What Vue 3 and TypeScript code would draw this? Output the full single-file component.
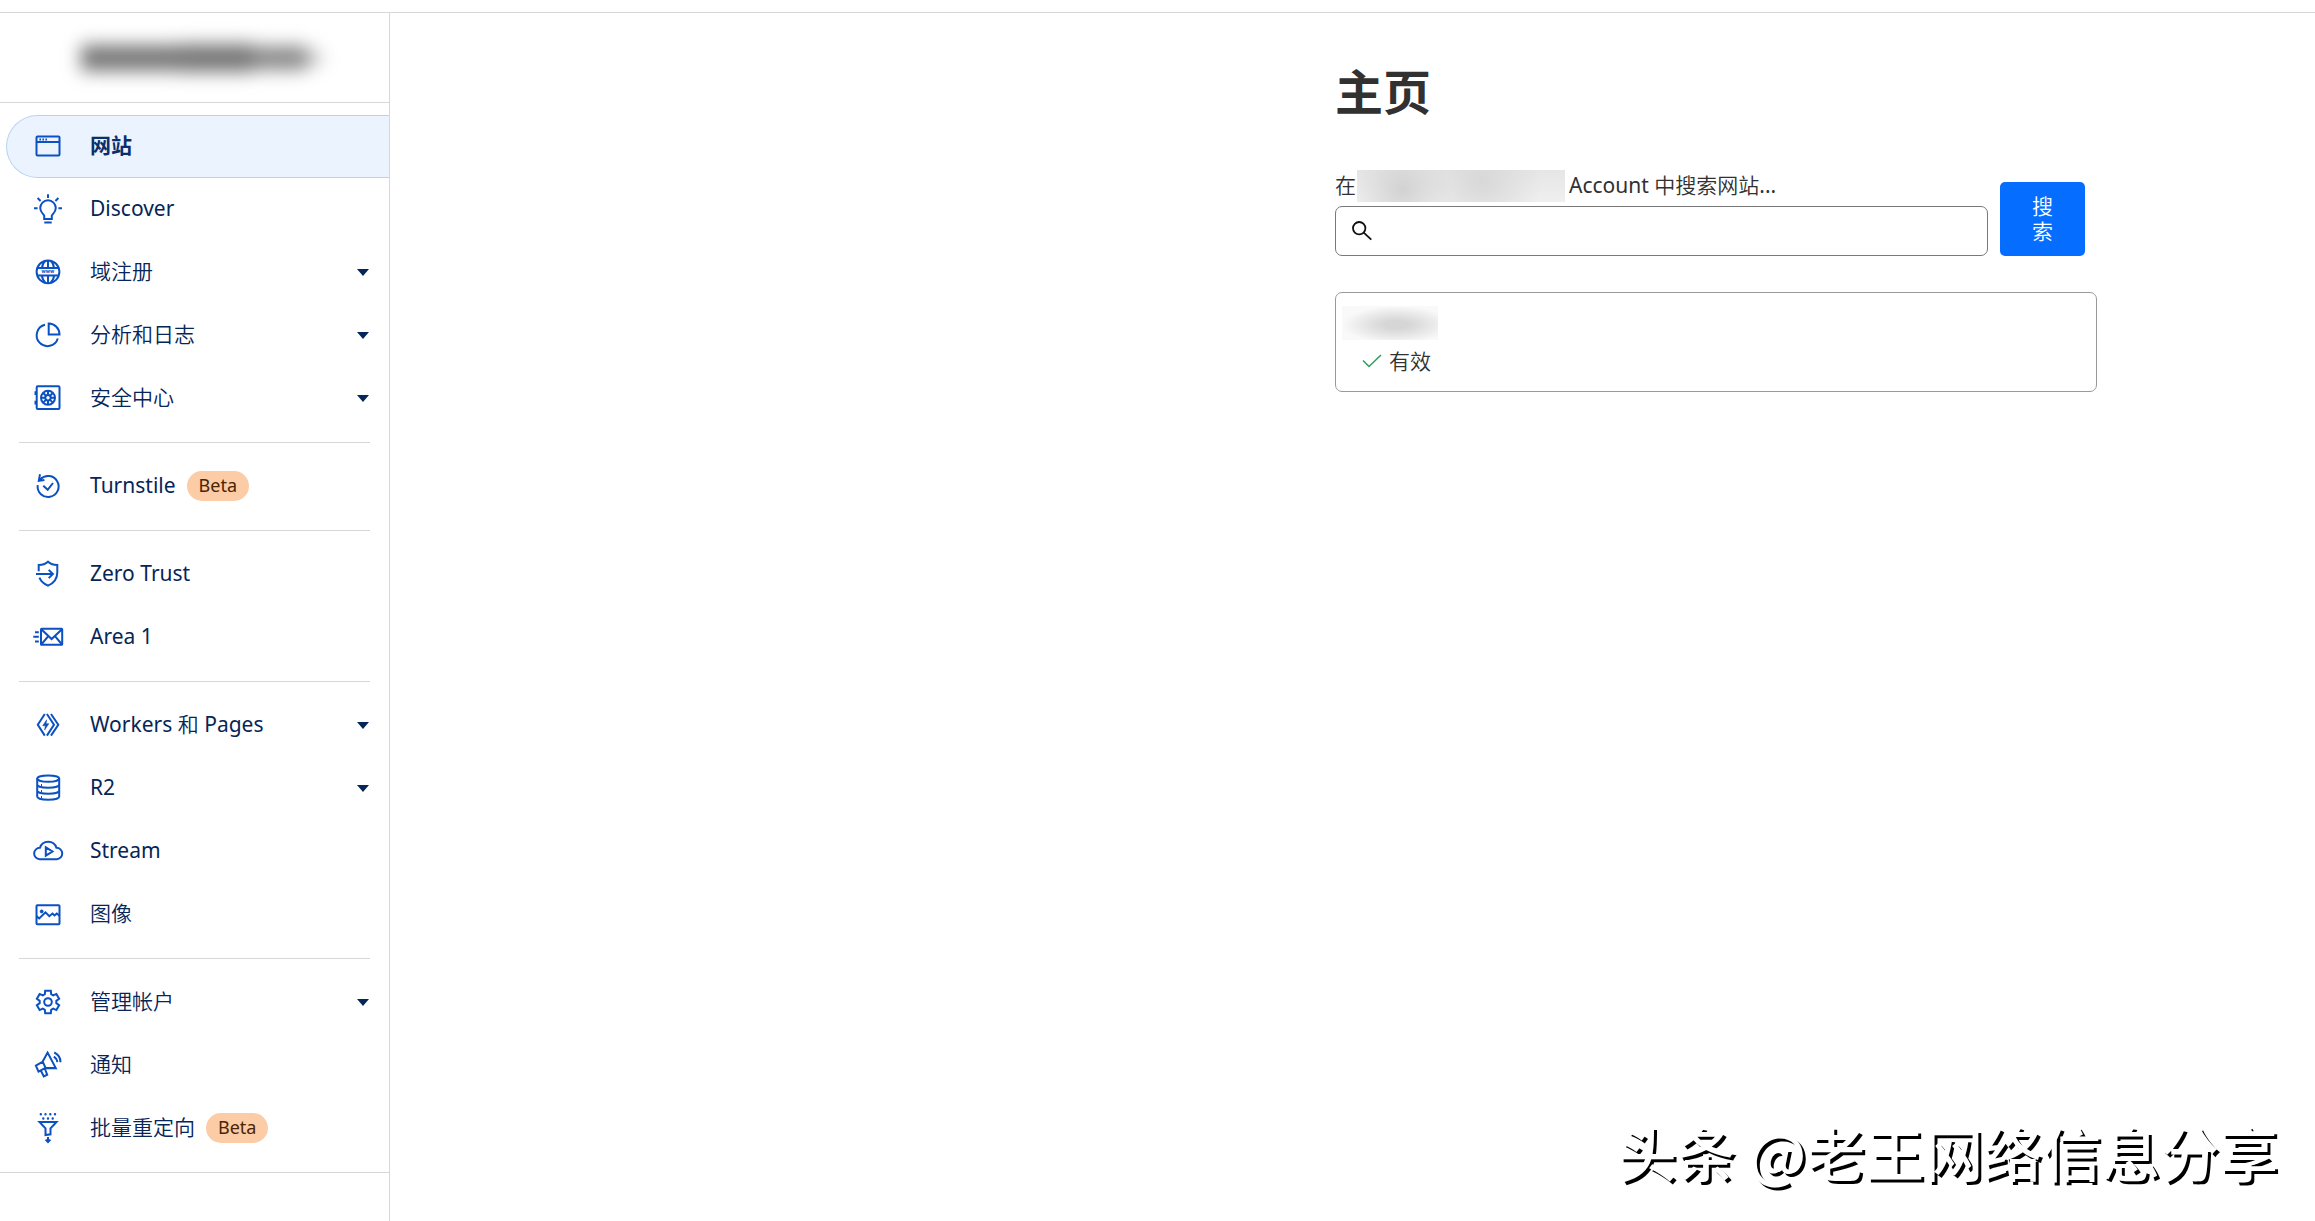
<script setup lang="ts">
import { ref } from 'vue'

interface NavItem {
  label: string
  icon: string
  expandable?: boolean
  badge?: string
}

const gear = (() => {
  const point = (deg: number, r: number) => {
    const a = (deg * Math.PI) / 180
    return `${(15 + r * Math.sin(a)).toFixed(2)} ${(15 - r * Math.cos(a)).toFixed(2)}`
  }
  const points: string[] = []
  for (let t = 0; t < 360; t += 60) {
    points.push(point(t - 22, 8.4), point(t - 14, 11.6), point(t + 14, 11.6), point(t + 22, 8.4))
  }
  return `<path d="M${points.join('L')}Z"/><circle cx="15" cy="15" r="3.8"/>`
})()

const spokes = [0, 45, 90, 135, 180, 225, 270, 315]
  .map((a) => `<path d="M15 12.2V8" transform="rotate(${a} 15 14.8)"/>`)
  .join('')

const icons: Record<string, string> = {
  window:
    '<rect x="3.5" y="5.5" width="23" height="19" rx="1"/><path d="M3.5 11h23"/><path stroke-dasharray="1.6 1.4" d="M6.4 8.4h8"/>',
  bulb:
    '<path d="M11.2 25v-3.2c0-1.3-4-3.2-4-7.7a7.8 7.8 0 0 1 15.6 0c0 4.5-4 6.4-4 7.7V25zM11.3 28.6h7.4M15 .2v3.8M1 14.2h3.6M25.4 14.2H29M4.6 4l3 3M25.4 4l-3 3"/>',
  globe:
    '<circle cx="15" cy="14.8" r="11.4"/><path d="M4.2 11h21.6M4.2 18.6h21.6M15 3.4V11M15 18.6v7.6M12.6 3.6C10.4 5.5 9.3 8 8.9 11M17.4 3.6c2.2 1.9 3.3 4.4 3.7 7.4M8.9 18.6c.4 3 1.5 5.5 3.7 7.4M21.1 18.6c-.4 3-1.5 5.5-3.7 7.4"/><text x="15" y="16.4" text-anchor="middle" font-size="5" font-weight="700" font-family="Inter, sans-serif" fill="currentColor" stroke="none">www</text>',
  pie: '<path d="M12 4.8A10.8 10.8 0 1 0 24.8 18.5M15.7 3.5a11 11 0 0 1 10.8 11H15.700z"/>',
  safe:
    '<rect x="3.7" y="3.3" width="22.8" height="22.8" rx="1"/><path d="M2.5 8.3v3.6M2.5 17.8v3.6"/><circle cx="15" cy="14.8" r="7"/><circle cx="15" cy="14.8" r="2.7"/>' + spokes,
  turnstile:
    '<path d="M4.7 14.2A10.5 10.5 0 1 0 7.4 8.4L5.8 9.8M7 3.2L5.8 9.9l5.6-.8M10.3 14.8l4.4 4L20 12"/>',
  shield:
    '<path d="M5.7 12.2V6C9 6 12.5 5 15 2.7 17.5 5 21 6 24.3 6v7.5c0 6.5-4.3 11-9.3 13.2-3.5-1.5-7-4.2-8.6-8M3 15h17M15.7 10.9l4.2 4.1-4.2 4.1"/>',
  mail:
    '<rect x="8" y="6.8" width="21.2" height="16" rx=".6"/><path d="M8.3 7.2L18.6 17 29 7.2M8.3 22.5l7-8.3M29 22.5l-7-8.3M2 10.2h3.8M.3 14.8h5.5M2 19.5h3.8"/>',
  workers:
    '<path d="M11.8 4L4.8 14.7l7 10.9M13.9 4l7.1 10.7-7.1 10.9M18 4l7.3 10.7L18 25.6"/><path fill="currentColor" stroke-width=".6" d="M13.7 9.8l-4 5.9h2.7l-.8 4.3 4.2-6.3h-2.8z"/>',
  database:
    '<ellipse cx="15.2" cy="5.6" rx="11" ry="3.2"/><path d="M4.2 5.6v18c0 4.3 22 4.3 22 0v-18M4.2 11.6c0 4.3 22 4.3 22 0M4.2 17.6c0 4.3 22 4.3 22 0M8 12h1M8 18h1M8 24h1"/>',
  cloud:
    '<path d="M6.7 23.2a5.7 5.7 0 1 1 .3-11.4 8.6 8.6 0 0 1 16.4 0 5.7 5.7 0 1 1 .3 11.4zM12.8 11.3v8.4l6.7-4.2z"/>',
  image:
    '<rect x="3.5" y="6.2" width="23" height="19" rx=".8"/><path d="M3.5 17.4l2.7 2 6.3-6 3.8 3.8 3.2-2.7 2 2 2.3-2 2.7 2.3"/><circle cx="8.7" cy="12.4" r="1.6" fill="currentColor" stroke-width=".6"/>',
  gear,
  megaphone:
    '<path d="M2.9 15.6l6.8-4 2.8 6.3-7 3.7zM9.7 11.6l4.9-9 8.2 15.5-10.3-.2M7.8 20.5l3 5.9 3.4-1.7-2.4-6.2M21.2 2.5c3.7 1.8 6.3 5.4 6.3 9.7M20.8 6.6c2 1.2 3.3 3.2 3.5 5.6"/>',
  funnel:
    '<path d="M6.5 9h17l-6 6.3v6l-5 .8v-6.8zM15 24v4.8M12.6 26.6l2.4 2.4 2.4-2.4"/><path stroke-linecap="round" stroke-width="2.4" d="M7.8 1.2h.01M12.5 1.2h.01M17.3 1.2h.01M22 1.2h.01M10.3 5.5h.01M15 5.5h.01M19.7 5.5h.01"/>',
}

const groups: NavItem[][] = [
  [
    { label: '网站', icon: 'window' },
    { label: 'Discover', icon: 'bulb' },
    { label: '域注册', icon: 'globe', expandable: true },
    { label: '分析和日志', icon: 'pie', expandable: true },
    { label: '安全中心', icon: 'safe', expandable: true },
  ],
  [{ label: 'Turnstile', icon: 'turnstile', badge: 'Beta' }],
  [
    { label: 'Zero Trust', icon: 'shield' },
    { label: 'Area 1', icon: 'mail' },
  ],
  [
    { label: 'Workers 和 Pages', icon: 'workers', expandable: true },
    { label: 'R2', icon: 'database', expandable: true },
    { label: 'Stream', icon: 'cloud' },
    { label: '图像', icon: 'image' },
  ],
  [
    { label: '管理帐户', icon: 'gear', expandable: true },
    { label: '通知', icon: 'megaphone' },
    { label: '批量重定向', icon: 'funnel', badge: 'Beta' },
  ],
]

const active = ref('网站')
const query = ref('')
</script>

<template>
  <div class="page">
    <aside class="sidebar">
      <div class="account">
        <span class="account-name"><i></i><i></i><i></i><i></i></span>
      </div>
      <nav class="nav">
        <ul v-for="(group, g) in groups" :key="g" class="group">
          <li v-for="item in group" :key="item.label">
            <component
              :is="item.expandable ? 'button' : 'a'"
              class="item"
              :class="{ active: item.label === active }"
              :href="item.expandable ? undefined : '#'"
              :type="item.expandable ? 'button' : undefined"
              @click.prevent="active = item.label"
            >
              <svg class="icon" viewBox="0 0 30 30" aria-hidden="true" v-html="icons[item.icon]"></svg>
              <span class="label">{{ item.label }}</span>
              <span v-if="item.badge" class="badge">{{ item.badge }}</span>
              <svg v-if="item.expandable" class="caret" viewBox="0 0 12 7" aria-hidden="true">
                <path d="M0 0h12L6 7z" />
              </svg>
            </component>
          </li>
        </ul>
      </nav>
    </aside>

    <main class="main">
      <div class="content">
        <h1>主页</h1>
        <form class="search" @submit.prevent>
          <div class="field">
            <label for="site-search">在<span class="mask mask-account"></span>Account 中搜索网站...</label>
            <div class="box">
              <svg class="lens" viewBox="0 0 20 20" aria-hidden="true">
                <circle cx="7.2" cy="7.2" r="6.2" />
                <path d="M11.7 11.7l7.6 7" />
              </svg>
              <input id="site-search" v-model="query" type="text" />
            </div>
          </div>
          <button class="submit" type="submit">搜索</button>
        </form>
        <section class="card">
          <span class="mask mask-site"></span>
          <p class="status">
            <svg class="check" viewBox="0 0 20 14" aria-hidden="true"><path d="M1 6.5l6 6L19 1" /></svg>
            <span>有效</span>
          </p>
        </section>
      </div>
    </main>

    <div class="watermark">头条 @老王网络信息分享</div>
  </div>
</template>

<style>
body {
  background: #fff;
}
</style>

<style scoped>
* {
  box-sizing: border-box;
}
.page {
  position: relative;
  display: flex;
  min-height: 100vh;
  padding-top: 12px;
  font-family: 'Noto Sans', 'Noto Sans CJK SC DemiLight', 'Noto Sans CJK SC', sans-serif;
  font-size: 21px;
  line-height: 28px;
  color: #313131;
}
.sidebar {
  flex: 0 0 390px;
  border-top: 1px solid #d5d7d8;
  border-right: 1px solid #d5d7d8;
}
.account {
  display: flex;
  justify-content: center;
  align-items: center;
  height: 90px;
  border-bottom: 1px solid #d5d7d8;
}
.account-name {
  display: flex;
  align-items: center;
  width: 240px;
  margin-left: 12px;
  filter: blur(9px);
}
.account-name i {
  background: #777;
}
.account-name i:nth-child(1) {
  width: 98px;
  height: 26px;
}
.account-name i:nth-child(2) {
  width: 74px;
  height: 28px;
}
.account-name i:nth-child(3) {
  width: 54px;
  height: 24px;
  background: #8a8a8a;
}
.account-name i:nth-child(4) {
  width: 14px;
  height: 12px;
  background: #bbb;
}
.nav {
  padding: 12px 0;
  border-bottom: 1px solid #d5d7d8;
}
.group {
  margin: 0;
  padding: 0;
  list-style: none;
}
.group + .group::before {
  content: '';
  display: block;
  height: 1px;
  margin: 12px 19px;
  background: #d5d7d8;
}
.item {
  display: flex;
  align-items: center;
  width: calc(100% - 6px);
  height: 63px;
  margin-left: 6px;
  padding: 0 20px 1px 26px;
  border: 1px solid transparent;
  border-right: 0;
  border-radius: 32px 0 0 32px;
  background: none;
  font: inherit;
  color: #062558;
  text-align: left;
  text-decoration: none;
  cursor: pointer;
}
.item.active {
  border-color: #b9d2f3;
  background: #ebf3fe;
  font-family: 'Noto Sans', 'Noto Sans CJK SC', sans-serif;
  font-weight: 700;
  color: #0b2f6b;
}
.icon {
  flex: none;
  width: 30px;
  height: 30px;
  margin-right: 27px;
  overflow: visible;
  fill: none;
  stroke: #0b51c1;
  stroke-width: 2;
  color: #0b51c1;
}
.label {
  padding-bottom: 3px;
}
.badge {
  margin-left: 11px;
  padding: 0 12px 2px;
  border-radius: 15px;
  background: #fbcca6;
  font-size: 18px;
  line-height: 28px;
  color: #4a2405;
}
.caret {
  width: 12px;
  height: 7px;
  margin-left: auto;
  fill: #062558;
}
.main {
  flex: 1;
  display: grid;
  grid-template-columns: 945fr 762fr 218fr;
  align-content: start;
  border-top: 1px solid #d5d7d8;
}
.content {
  grid-column: 2;
  padding-top: 47px;
}
h1 {
  margin: 0;
  font-family: 'Noto Sans', 'Noto Sans CJK SC', sans-serif;
  font-size: 48px;
  line-height: 64px;
  font-weight: 700;
}
.search {
  display: flex;
  align-items: flex-end;
  gap: 12px;
  margin-top: 46px;
  padding-right: 12px;
}
.field {
  flex: 1;
}
label {
  display: flex;
  align-items: center;
  height: 36px;
  padding-bottom: 7px;
}
.mask {
  display: block;
}
.mask-account {
  width: 208px;
  height: 32px;
  margin: 2px 4px 0 1px;
  background:
    radial-gradient(circle at 22% 60%, #d2d2d2, transparent 50px),
    radial-gradient(circle at 60% 30%, #d8d8d8, transparent 60px),
    linear-gradient(#e6e6e6, #efefef);
}
.mask-site {
  width: 96px;
  height: 34px;
  background: radial-gradient(ellipse at 57% 55%, #d6d6d6 15%, #e2e2e2 35%, #f9f9f9 70%);
}
.box {
  display: flex;
  align-items: center;
  height: 50px;
  padding: 0 16px;
  border: 1px solid #797979;
  border-radius: 7px;
}
.lens {
  flex: none;
  width: 20px;
  height: 20px;
  fill: none;
  stroke: #111;
  stroke-width: 1.8;
}
.box input {
  flex: 1;
  min-width: 0;
  padding: 0 12px;
  border: 0;
  outline: 0;
  background: none;
  font: inherit;
  color: inherit;
}
.submit {
  width: 85px;
  padding: 12px 32px;
  border: 0;
  border-radius: 5px;
  background: #056dff;
  font: inherit;
  line-height: 25px;
  color: #fff;
  cursor: pointer;
}
.card {
  margin-top: 36px;
  padding: 13px 6px 16px;
  border: 1px solid #999;
  border-radius: 7px;
}
.status {
  display: flex;
  align-items: center;
  gap: 7px;
  margin: 7px 0 0 20px;
}
.check {
  width: 20px;
  height: 14px;
  fill: none;
  stroke: #2f9e63;
  stroke-width: 1.6;
}
.watermark {
  position: absolute;
  right: 37px;
  bottom: 29px;
  font-family: 'Noto Sans CJK SC', sans-serif;
  font-size: 59px;
  line-height: 80px;
  font-weight: 500;
  color: #fff;
  text-shadow: 3px 3px 0 #000;
  white-space: nowrap;
}
</style>
